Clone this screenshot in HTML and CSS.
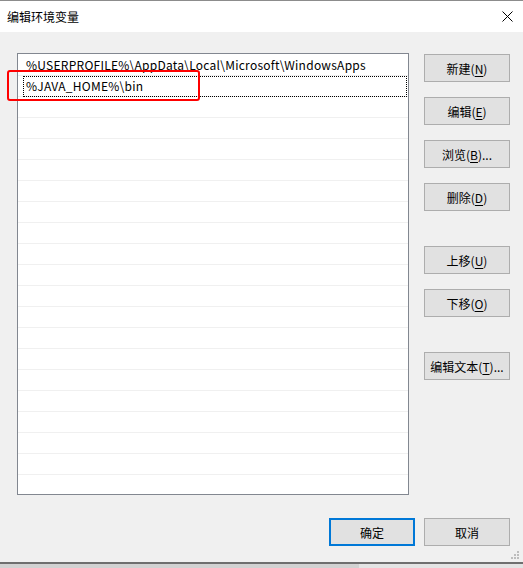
FILE: index.html
```html
<!DOCTYPE html>
<html lang="zh-CN">
<head>
    <meta charset="UTF-8">
    <title>编辑环境变量</title>
    <link rel="stylesheet" href="styles.css">
</head>
<body>
    <div class="window">
        <div class="titlebar">
            <span class="title">编辑环境变量</span>
            <svg class="close" width="11" height="11" viewBox="0 0 11 11">
                <path d="M0.5 0.5 L10.5 10.5 M10.5 0.5 L0.5 10.5" stroke="#000" stroke-width="1" fill="none"/>
            </svg>
        </div>

        <div class="content">
            <div class="main-row">
                <div class="listbox">
                    <div class="row">%USERPROFILE%\AppData\Local\Microsoft\WindowsApps</div>
                    <div class="row focused">%JAVA_HOME%\bin</div>
                    <div class="row"></div>
                    <div class="row"></div>
                    <div class="row"></div>
                    <div class="row"></div>
                    <div class="row"></div>
                    <div class="row"></div>
                    <div class="row"></div>
                    <div class="row"></div>
                    <div class="row"></div>
                    <div class="row"></div>
                    <div class="row"></div>
                    <div class="row"></div>
                    <div class="row"></div>
                    <div class="row"></div>
                    <div class="row"></div>
                    <div class="row"></div>
                    <div class="row"></div>
                    <div class="row"></div>
                </div>

                <div class="side-buttons">
                    <button class="btn">新建(<u>N</u>)</button>
                    <button class="btn">编辑(<u>E</u>)</button>
                    <button class="btn">浏览(<u>B</u>)...</button>
                    <button class="btn">删除(<u>D</u>)</button>
                    <button class="btn group-start">上移(<u>U</u>)</button>
                    <button class="btn">下移(<u>O</u>)</button>
                    <button class="btn group-start">编辑文本(<u>T</u>)...</button>
                </div>
            </div>

            <div class="footer">
                <button class="btn default">确定</button>
                <button class="btn">取消</button>
            </div>

            <svg class="grip" width="9" height="9" viewBox="0 0 9 9">
                <rect x="6" y="0" width="2" height="2" fill="#bdbdbd"/>
                <rect x="3" y="3" width="2" height="2" fill="#bdbdbd"/>
                <rect x="6" y="3" width="2" height="2" fill="#bdbdbd"/>
                <rect x="0" y="6" width="2" height="2" fill="#bdbdbd"/>
                <rect x="3" y="6" width="2" height="2" fill="#bdbdbd"/>
                <rect x="6" y="6" width="2" height="2" fill="#bdbdbd"/>
            </svg>
        </div>
    </div>

    <div class="taskbar-edge">
        <div class="edge-light"></div>
    </div>

    <!-- annotation drawn over the screenshot -->
    <div class="highlight"></div>
</body>
</html>
```

FILE: styles.css
```css
body {
    margin: 0;
    padding: 0;
    width: 523px;
    height: 568px;
    overflow: hidden;
    position: relative;
    background-color: #f0f0f0;
    font-family: "Noto Sans CJK SC", "Noto Sans", sans-serif;
    font-size: 12px;
    color: #000;
}

.window {
    border-top: 1px solid #8c8c8c;
    height: 562px;
    box-sizing: border-box;
}

.titlebar {
    height: 31px;
    background-color: #fff;
    display: flex;
    align-items: center;
    justify-content: space-between;
    padding: 0 10px 0 7px;
}

.title {
    line-height: 16px;
}

.content {
    position: relative;
    height: 530px;
    padding: 21px 0 0 17px;
    box-sizing: border-box;
}

.main-row {
    display: flex;
    align-items: flex-start;
}

.listbox {
    width: 392px;
    height: 442px;
    padding-top: 1px;
    border: 1px solid #828790;
    box-sizing: border-box;
    background-color: #fff;
}

.row {
    position: relative;
    height: 20px;
    line-height: 20px;
    padding-left: 8px;
    border-bottom: 1px solid #f0f0f0;
    white-space: nowrap;
    letter-spacing: 0.25px;
}

.row.focused::after {
    content: "";
    position: absolute;
    left: 5px;
    right: 1px;
    top: 0;
    bottom: -1px;
    border: 1px dotted #000;
}

.side-buttons {
    display: flex;
    flex-direction: column;
    margin-left: 15px;
    padding-top: 1px;
}

.btn {
    width: 86px;
    height: 28px;
    margin: 0;
    padding: 0;
    background-color: #e1e1e1;
    border: 1px solid #adadad;
    font-family: inherit;
    font-size: 12px;
    color: #000;
    box-sizing: border-box;
}

.side-buttons .btn + .btn {
    margin-top: 15px;
}

.side-buttons .btn.group-start {
    margin-top: 35px;
}

.btn u {
    text-underline-offset: 2px;
}

.footer {
    display: flex;
    justify-content: flex-end;
    gap: 9px;
    width: 493px;
    margin-top: 23px;
}

.btn.default {
    border: 2px solid #0078d7;
}

.grip {
    position: absolute;
    right: 3px;
    bottom: 2px;
}

.taskbar-edge {
    height: 6px;
    border-top: 2px solid #6f6f6f;
    background-color: #d2d2d2;
    box-sizing: border-box;
}

.edge-light {
    margin-left: 359px;
    width: 164px;
    height: 100%;
    background-color: #e4e4e4;
}

.highlight {
    position: absolute;
    left: 7px;
    top: 70px;
    width: 193px;
    height: 31px;
    border: 2px solid #f00;
    border-radius: 3px;
    box-sizing: border-box;
}
```
